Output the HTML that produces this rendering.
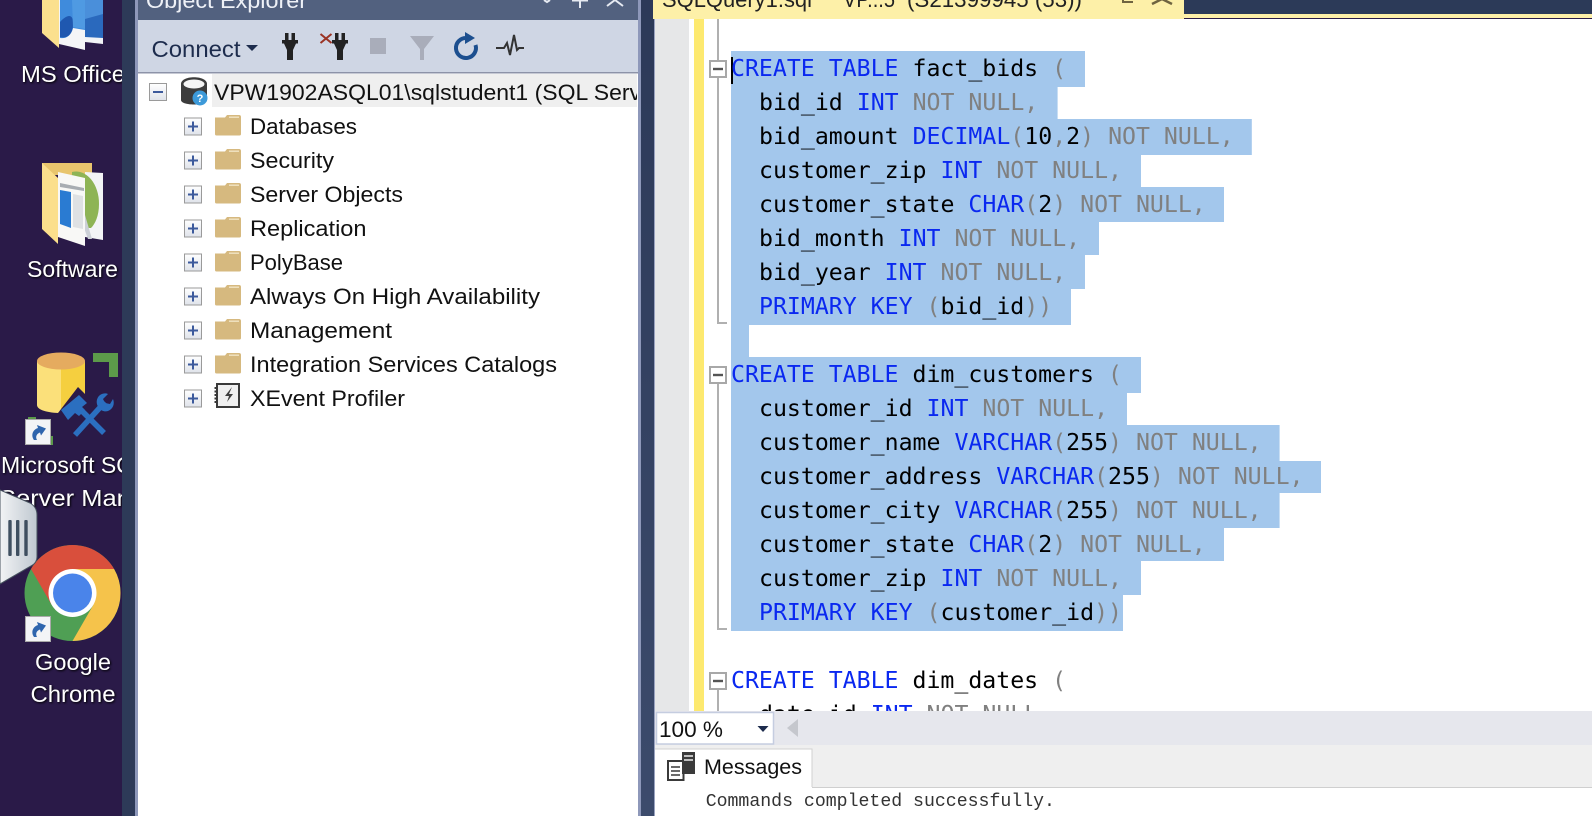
<!DOCTYPE html>
<html lang="en">
<head>
<meta charset="utf-8">
<title>SSMS</title>
<style>
html,body{margin:0;padding:0;background:#2a1a48;overflow:hidden;width:1592px;height:816px}
svg{display:block}
text{white-space:pre}
.u{font-family:"Liberation Sans",sans-serif;font-size:22.5px;fill:#111}
.d{font-family:"Liberation Sans",sans-serif;font-size:23px;fill:#fff;filter:drop-shadow(1px 1px 1px #000)}
.c{font-family:"DejaVu Sans Mono","Liberation Mono",monospace;font-size:23.2px;fill:#000}
.k{fill:#0a28f0}
.g{fill:#808080}
.sel rect{fill:#a3c7ec}
.fold rect{fill:#fff;stroke:#a8a8a8;stroke-width:2}
.fold path{stroke:#555;stroke-width:2.4;fill:none}
</style>
</head>
<body>
<svg width="1592" height="816" viewBox="0 0 1592 816" xmlns="http://www.w3.org/2000/svg">
<defs>
<linearGradient id="box" x1="0" y1="0" x2="0" y2="1"><stop offset="0" stop-color="#fff"/><stop offset="1" stop-color="#dfe3ea"/></linearGradient>
<linearGradient id="handle" x1="0" y1="0" x2="1" y2="0"><stop offset="0" stop-color="#f2f3f5"/><stop offset="1" stop-color="#bfc8d0"/></linearGradient>
<linearGradient id="strip" x1="0" y1="0" x2="0" y2="1"><stop offset="0" stop-color="#2c3958"/><stop offset="1" stop-color="#3c4b6c"/></linearGradient>
<clipPath id="dk"><rect x="0" y="0" width="122" height="816"/></clipPath>
<clipPath id="tr"><rect x="138" y="0" width="499" height="816"/></clipPath>
<clipPath id="ed"><rect x="655" y="18" width="937" height="693"/></clipPath>
<g id="plus"><rect x=".5" y=".5" width="17" height="17" fill="url(#box)" stroke="#9a9a9a"/><path d="M4 9h10M9 4v10" stroke="#3c5a9c" stroke-width="2"/></g>
<g id="folder"><path d="M0 3.5h10l2-2.5h12a2 2 0 0 1 2 2v17a1.5 1.5 0 0 1-1.5 1.5H1.500A1.5 1.5 0 0 1 0 20z" fill="#d6b97f"/><path d="M14 3.2h10" stroke="#f1e4c4" stroke-width="1.4"/></g>
<g id="short"><rect x=".5" y=".5" width="25" height="25" fill="#f3f4f6" stroke="#a9a9a9"/><path d="M9 21c-3-4-2-10 4-12l-1-3 9 3.500-5 7-1-3c-3 1-5 4-3 7.500z" fill="#2f65ad"/></g>
<g id="plug"><path d="M285 33h3.500v7h3v-7h3.500v7h3v3.500h-2l-3 6.500v10h-6V50l-3-6.500h-2V40h3z" fill="#222"/></g>
</defs>

<!-- desktop -->
<rect width="1592" height="816" fill="#2a1a48"/>
<!-- MS Office icon -->
<path d="M59 0h26v50l-26-6z" fill="#f4f5f7"/>
<path d="M60 0h25v30l-12-2c-2 8-7 11-13 10z" fill="#3f8bdc"/>
<path d="M60 22c6-7 14-10 13 3 0 9-6 14-13 12z" fill="#1f58b0"/>
<path d="M72 0h13v29l-12-2z" fill="#4f9ae2"/>
<path d="M85 0h18v44l-18-2z" fill="#f1f3f6"/>
<path d="M85 0h18v38l-18-1z" fill="#2a69bd"/>
<path d="M85 0h18v14l-18 5z" fill="#4a8fda"/>
<path d="M42 0h17v48l-17-15z" fill="#fbe08e"/>
<text class="d" x="21" y="82" textLength="104" lengthAdjust="spacingAndGlyphs" clip-path="url(#dk)">MS Office</text>
<!-- Software icon -->
<path d="M42 163h50v12h-50z" fill="#e8c56d"/>
<path d="M85 172l18 1v67l-18-3z" fill="#f3f4f6"/>
<path d="M72 172a23 32 0 0 1 27 32c0 12-4 20-8 24h-19z" fill="#8eb455"/>
<path d="M85 215l7 24h-4l-5-14z" fill="#ccd0d6"/>
<path d="M58 172l27 6v68l-27-9z" fill="#f8f8f6"/>
<path d="M60 183l24 5v3l-24-4z" fill="#a8adb2"/>
<path d="M60 190l11 2v36l-11-4z" fill="#2a7bd2"/>
<path d="M73 194l10 2v33l-10-2z" fill="#dfe1e3"/>
<path d="M42 163l16 15v66l-16-15z" fill="#fbdf8c"/>
<text class="d" x="27" y="277" textLength="91" lengthAdjust="spacingAndGlyphs">Software</text>
<!-- SQL icon -->
<path d="M93 353h25v24h-9v-15H93z" fill="#5c9a4a"/>
<path d="M37 361v44c0 5 11 8 24 8V361z" fill="#fbe07a"/>
<path d="M61 361v52c13 0 24-3 24-8V361z" fill="#f5cf3f"/>
<ellipse cx="61" cy="361" rx="24" ry="8.500" fill="#e5ab5f"/>
<path d="M58 413l20-26 30 30-10 10z" fill="#2a1a48"/>
<path d="M75 435l30-33M74 403l30 30" stroke="#2b6fc0" stroke-width="5.500" fill="none"/>
<path d="M61 410l18-15 8 8-5 4 3 3-6 6-4-3-7 7z" fill="#2b6fc0"/>
<path d="M99 408a9 9 0 0 1 1-13c3-2 6-2 8-1l-5 5 2 4 5 1 3-5c2 5 0 10-5 12-3 1-7 0-9-3z" fill="#2b6fc0"/>
<rect x="28" y="417" width="8" height="6" fill="#5c9a4a"/><rect x="49" y="436" width="4" height="9" fill="#5c9a4a"/>
<use href="#short" x="25" y="419"/>
<text class="d" x="1" y="473" textLength="146" lengthAdjust="spacingAndGlyphs" clip-path="url(#dk)">Microsoft SQL</text>
<text class="d" x="-1" y="506" textLength="146" lengthAdjust="spacingAndGlyphs" clip-path="url(#dk)">Server Mana</text>
<!-- Chrome icon -->
<circle cx="72.500" cy="593" r="48" fill="#4f9f54"/>
<path d="M114.100 569A48 48 0 0 0 31 569L51.700 605 72.500 593z" fill="#d94f3c"/>
<path d="M72.500 569H114.100A48 48 0 0 1 72.500 641L93.300 605z" fill="#f5c34b"/>
<circle cx="72.500" cy="593" r="24" fill="#fff"/>
<circle cx="72.500" cy="593" r="19.500" fill="#4a84ea"/>
<use href="#short" x="25" y="616"/>
<text class="d" x="35" y="670" textLength="76" lengthAdjust="spacingAndGlyphs">Google</text>
<text class="d" x="30.500" y="702" textLength="85" lengthAdjust="spacingAndGlyphs">Chrome</text>
<!-- side handle -->
<path d="M0 490L30 503Q37 507 37 515V557Q37 563 31 566L0 584z" fill="url(#handle)" stroke="#46525e" stroke-width="1"/>
<rect x="8.300" y="520" width="3.400" height="36" rx="1" fill="#3f4f60"/>
<rect x="16" y="520" width="3.400" height="36" rx="1" fill="#3f4f60"/>
<rect x="24.300" y="520" width="3.400" height="36" rx="1" fill="#3f4f60"/>

<!-- strip -->
<rect x="122" y="0" width="13" height="816" fill="#2d3a58"/>
<rect x="135" y="0" width="3" height="816" fill="#8e98ba"/>

<!-- Object explorer -->
<rect x="138" y="0" width="501" height="816" fill="#fff"/>
<rect x="138" y="0" width="501" height="20" fill="#52617f"/>
<text class="u" x="146" y="8" textLength="161" lengthAdjust="spacingAndGlyphs" style="fill:#eef1f7">Object Explorer</text>
<path d="M544 0l3 2 3-2" stroke="#e6eaf2" stroke-width="2" fill="none"/>
<path d="M580 0v8M572 .5h16" stroke="#e6eaf2" stroke-width="2" fill="none"/>
<path d="M607 6l8-6 8 6" stroke="#e6eaf2" stroke-width="2" fill="none"/>
<rect x="138" y="20" width="501" height="52" fill="#cfd6e4"/>
<rect x="138" y="72" width="501" height="1.500" fill="#8d93a8"/>
<text class="u" x="151.500" y="57" textLength="89" lengthAdjust="spacingAndGlyphs" style="fill:#1d2c4d;font-size:23px">Connect</text>
<path d="M246 45h12l-6 6z" fill="#1d2c4d"/>
<use href="#plug"/>
<use href="#plug" x="50"/>
<path d="M320.500 34l11 9M331.500 34l-11 9" stroke="#9a3324" stroke-width="2"/>
<rect x="370" y="38" width="16" height="16" fill="#a9adba"/>
<path d="M410 36h24l-10 13v11h-4V49z" fill="#a9adba"/>
<path d="M466 38A10 10 0 1 0 475.500 45" fill="none" stroke="#1c4f8f" stroke-width="4"/>
<path d="M465 32l10 6-10 6z" fill="#1c4f8f"/>
<path d="M496 48h8l3-5 3 12 4-20 3 15 2-2h5" stroke="#333" stroke-width="2" fill="none"/>

<!-- tree -->
<rect x="212" y="74" width="425" height="33" fill="#efefef"/>
<rect x="149.500" y="83.500" width="17" height="17" fill="url(#box)" stroke="#9a9a9a"/><path d="M153 92h10" stroke="#3c5a9c" stroke-width="2"/>
<path d="M181 84c0-9 26-9 26 0v16c0 6-26 6-26 0z" fill="#3c3c3c"/>
<ellipse cx="194" cy="84" rx="10.500" ry="4.500" fill="#f4f4f4"/>
<circle cx="200" cy="98" r="7.500" fill="#3d9ad9"/>
<text x="200" y="102" text-anchor="middle" style="font:bold 11px 'Liberation Sans',sans-serif;fill:#fff">?</text>
<g clip-path="url(#tr)">
<text class="u" x="214" y="100" textLength="427" lengthAdjust="spacingAndGlyphs">VPW1902ASQL01\sqlstudent1 (SQL Serv</text>
<use href="#plus" x="184" y="117.500"/><use href="#folder" x="215" y="114"/><text class="u" x="250" y="134" textLength="107" lengthAdjust="spacingAndGlyphs">Databases</text>
<use href="#plus" x="184" y="151.500"/><use href="#folder" x="215" y="148"/><text class="u" x="250" y="168" textLength="84" lengthAdjust="spacingAndGlyphs">Security</text>
<use href="#plus" x="184" y="185.500"/><use href="#folder" x="215" y="182"/><text class="u" x="250" y="202" textLength="153" lengthAdjust="spacingAndGlyphs">Server Objects</text>
<use href="#plus" x="184" y="219.500"/><use href="#folder" x="215" y="216"/><text class="u" x="250" y="236" textLength="116.500" lengthAdjust="spacingAndGlyphs">Replication</text>
<use href="#plus" x="184" y="253.500"/><use href="#folder" x="215" y="250"/><text class="u" x="250" y="270" textLength="93" lengthAdjust="spacingAndGlyphs">PolyBase</text>
<use href="#plus" x="184" y="287.500"/><use href="#folder" x="215" y="284"/><text class="u" x="250" y="304" textLength="290" lengthAdjust="spacingAndGlyphs">Always On High Availability</text>
<use href="#plus" x="184" y="321.500"/><use href="#folder" x="215" y="318"/><text class="u" x="250" y="338" textLength="142" lengthAdjust="spacingAndGlyphs">Management</text>
<use href="#plus" x="184" y="355.500"/><use href="#folder" x="215" y="352"/><text class="u" x="250" y="372" textLength="307" lengthAdjust="spacingAndGlyphs">Integration Services Catalogs</text>
<use href="#plus" x="184" y="389.500"/>
<rect x="217" y="384" width="22" height="23" fill="#f0f0f0" stroke="#3a3a3a" stroke-width="2"/>
<path d="M216 387v17" stroke="#3a3a3a" stroke-width="3" stroke-dasharray="2 1.500"/>
<path d="M232 387l-7 9h4l-2 6 6-8h-4l3-7z" fill="#3f3f3f"/>
<text class="u" x="250" y="406" textLength="155" lengthAdjust="spacingAndGlyphs">XEvent Profiler</text>
</g>

<!-- right side strip -->
<rect x="638" y="0" width="3" height="816" fill="#8e98ba"/>
<rect x="641" y="0" width="13" height="816" fill="url(#strip)"/>
<rect x="654" y="0" width="1" height="816" fill="#9aa3c0"/>

<!-- top tab -->
<rect x="1184" y="0" width="408" height="14" fill="#2c3a58"/>
<rect x="1184" y="14" width="408" height="4" fill="#fdf0a8"/>
<rect x="653" y="0" width="531" height="19" fill="#fdf0a8"/>
<text class="u" x="662" y="7" textLength="150" lengthAdjust="spacingAndGlyphs" style="fill:#222">SQLQuery1.sql</text>
<text class="u" x="843" y="7" textLength="52" lengthAdjust="spacingAndGlyphs" style="fill:#222">VP...5</text>
<text class="u" x="907" y="7" textLength="175" lengthAdjust="spacingAndGlyphs" style="fill:#222">(S21399945 (53))</text>
<path d="M1123 0v3M1123 2h10" stroke="#6f6440" stroke-width="2" fill="none"/>
<path d="M1152 4l10-5 10 5" stroke="#6f6440" stroke-width="2.500" fill="none"/>

<!-- editor -->
<rect x="655" y="19" width="937" height="797" fill="#fff"/>
<rect x="655" y="19" width="34" height="700" fill="#e6e7e8"/>
<rect x="694" y="19" width="10" height="700" fill="#fde96f"/>

<g clip-path="url(#ed)">
<path d="M718 19V60M718 78V323h9M718 384V629h9M718 689V712" stroke="#b0b0b0" stroke-width="2" fill="none"/>
<g class="sel">
<rect x="731" y="51" width="354" height="36"/>
<rect x="731" y="87" width="326.600" height="32"/>
<rect x="731" y="119" width="520.800" height="36"/>
<rect x="731" y="155" width="410" height="32"/>
<rect x="731" y="187" width="493" height="35"/>
<rect x="731" y="222" width="368" height="33"/>
<rect x="731" y="255" width="354" height="34"/>
<rect x="731" y="289" width="340" height="36"/>
<rect x="731" y="325" width="18" height="32"/>
<rect x="731" y="357" width="410" height="36"/>
<rect x="731" y="393" width="396" height="32"/>
<rect x="731" y="425" width="548.600" height="36"/>
<rect x="731" y="461" width="590" height="32"/>
<rect x="731" y="493" width="548.600" height="35"/>
<rect x="731" y="528" width="493" height="33"/>
<rect x="731" y="561" width="410" height="34"/>
<rect x="731" y="595" width="392" height="36"/>
</g>
<rect x="731" y="57" width="2" height="27" fill="#000"/>
<g class="fold">
<rect x="710" y="61" width="16" height="16"/><path d="M713 69h10"/>
<rect x="710" y="367" width="16" height="16"/><path d="M713 375h10"/>
<rect x="710" y="673" width="16" height="16"/><path d="M713 681h10"/>
</g>
<text class="c" x="731" y="76"><tspan class="k">CREATE TABLE</tspan> fact_bids <tspan class="g">(</tspan></text>
<text class="c" x="759" y="110">bid_id <tspan class="k">INT</tspan> <tspan class="g">NOT NULL,</tspan></text>
<text class="c" x="759" y="144">bid_amount <tspan class="k">DECIMAL</tspan><tspan class="g">(</tspan>10<tspan class="g">,</tspan>2<tspan class="g">)</tspan> <tspan class="g">NOT NULL,</tspan></text>
<text class="c" x="759" y="178">customer_zip <tspan class="k">INT</tspan> <tspan class="g">NOT NULL,</tspan></text>
<text class="c" x="759" y="212">customer_state <tspan class="k">CHAR</tspan><tspan class="g">(</tspan>2<tspan class="g">)</tspan> <tspan class="g">NOT NULL,</tspan></text>
<text class="c" x="759" y="246">bid_month <tspan class="k">INT</tspan> <tspan class="g">NOT NULL,</tspan></text>
<text class="c" x="759" y="280">bid_year <tspan class="k">INT</tspan> <tspan class="g">NOT NULL,</tspan></text>
<text class="c" x="759" y="314"><tspan class="k">PRIMARY KEY</tspan> <tspan class="g">(</tspan>bid_id<tspan class="g">))</tspan></text>
<text class="c" x="731" y="382"><tspan class="k">CREATE TABLE</tspan> dim_customers <tspan class="g">(</tspan></text>
<text class="c" x="759" y="416">customer_id <tspan class="k">INT</tspan> <tspan class="g">NOT NULL,</tspan></text>
<text class="c" x="759" y="450">customer_name <tspan class="k">VARCHAR</tspan><tspan class="g">(</tspan>255<tspan class="g">)</tspan> <tspan class="g">NOT NULL,</tspan></text>
<text class="c" x="759" y="484">customer_address <tspan class="k">VARCHAR</tspan><tspan class="g">(</tspan>255<tspan class="g">)</tspan> <tspan class="g">NOT NULL,</tspan></text>
<text class="c" x="759" y="518">customer_city <tspan class="k">VARCHAR</tspan><tspan class="g">(</tspan>255<tspan class="g">)</tspan> <tspan class="g">NOT NULL,</tspan></text>
<text class="c" x="759" y="552">customer_state <tspan class="k">CHAR</tspan><tspan class="g">(</tspan>2<tspan class="g">)</tspan> <tspan class="g">NOT NULL,</tspan></text>
<text class="c" x="759" y="586">customer_zip <tspan class="k">INT</tspan> <tspan class="g">NOT NULL,</tspan></text>
<text class="c" x="759" y="620"><tspan class="k">PRIMARY KEY</tspan> <tspan class="g">(</tspan>customer_id<tspan class="g">))</tspan></text>
<text class="c" x="731" y="688"><tspan class="k">CREATE TABLE</tspan> dim_dates <tspan class="g">(</tspan></text>
<text class="c" x="759" y="722">date_id <tspan class="k">INT</tspan> <tspan class="g">NOT NULL,</tspan></text>
</g>

<!-- bottom bar -->
<rect x="655" y="711" width="937" height="34" fill="#e6e7ed"/>
<rect x="656.500" y="712.500" width="117" height="31.500" fill="#fff" stroke="#c5cde0" stroke-width="1.500"/>
<text class="u" x="659" y="737" textLength="64" lengthAdjust="spacingAndGlyphs" style="fill:#111">100 %</text>
<path d="M757.500 726h11l-5.500 6z" fill="#1d2c4d"/>
<path d="M798 719v18l-11-9z" fill="#c5c7cd"/>
<rect x="655" y="745" width="937" height="42" fill="#efefef"/>
<rect x="655" y="787" width="937" height="1" fill="#cfcfcf"/>
<rect x="655" y="749" width="157" height="40" fill="#fff"/>
<path d="M655 749h157v38" fill="none" stroke="#d2d2d2"/>
<path d="M668 761h15.500v19H668z" fill="#fff" stroke="#3a3a3a" stroke-width="2"/>
<path d="M671 767h9M671 771h9M671 775h9" stroke="#3a3a3a" stroke-width="1.500"/>
<rect x="682" y="752" width="13" height="22" fill="#3a3a3a"/>
<path d="M684 756h9M684 760h9" stroke="#eee" stroke-width="1.500"/>
<text class="u" x="704" y="774" textLength="98" lengthAdjust="spacingAndGlyphs" style="fill:#111;font-size:21.500px">Messages</text>
<text x="705.700" y="806" style="font-family:'Liberation Mono',monospace;font-size:18.200px;fill:#333">Commands completed successfully.</text>
</svg>
</body>
</html>
